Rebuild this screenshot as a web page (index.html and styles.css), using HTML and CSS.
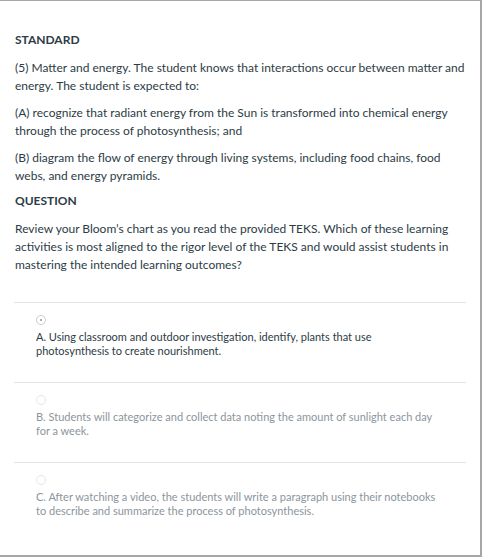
FILE: index.html
```html
<!DOCTYPE html>
<html>
<head>
<meta charset="utf-8">
<link rel="stylesheet" href="styles.css">
</head>
<body>
<div class="frame">
  <div class="content">
    <h3 class="label">STANDARD</h3>
    <p class="para">(5) Matter and energy. The student knows that interactions occur between matter and energy. The student is expected to:</p>
    <p class="para">(A) recognize that radiant energy from the Sun is transformed into chemical energy through the process of photosynthesis; and</p>
    <p class="para">(B) diagram the flow of energy through living systems, including food chains, food webs, and energy pyramids.</p>
    <h3 class="label">QUESTION</h3>
    <p class="para">Review your Bloom’s chart as you read the provided TEKS. Which of these learning activities is most aligned to the rigor level of the TEKS and would assist students in mastering the intended learning outcomes?</p>
  </div>
  <div class="options">
    <div class="option selected">
      <span class="radio"><span class="dot"></span></span>
      <div class="opt-text">A. Using classroom and outdoor investigation, identify, plants that use photosynthesis to create nourishment.</div>
    </div>
    <div class="option">
      <span class="radio"></span>
      <div class="opt-text">B. Students will categorize and collect data noting the amount of sunlight each day for a week.</div>
    </div>
    <div class="option">
      <span class="radio"></span>
      <div class="opt-text">C. After watching a video, the students will write a paragraph using their notebooks to describe and summarize the process of photosynthesis.</div>
    </div>
  </div>
</div>
</body>
</html>
```
FILE: styles.css
```css
html, body {
  margin: 0;
  padding: 0;
  background: #fff;
}
body {
  font-family: Lato, "Noto Sans", sans-serif;
  color: #2d3b45;
}
.frame {
  width: 482px;
  height: 557px;
  box-sizing: border-box;
  border-top: 1px solid #a6a6a6;
  border-right: 2px solid #a6a6a6;
  border-bottom: 2px solid #a6a6a6;
}
.content {
  padding: 32px 14px 0 15px;
}
.label {
  margin: 0 0 12px 0;
  font-size: 12px;
  font-weight: 700;
  line-height: 14px;
}
.para {
  margin: 0 0 9px 0;
  font-size: 12px;
  line-height: 18px;
}
.options {
  margin: 28px 14px 0 14px;
}
.option {
  border-top: 1px solid #e2e5e8;
  height: 67px;
  padding: 12px 0 0 22px;
}
.radio {
  display: flex;
  align-items: center;
  justify-content: center;
  width: 10px;
  height: 10px;
  box-sizing: border-box;
  border: 1px solid #e3e5e7;
  border-radius: 50%;
  margin-bottom: 5px;
}
.selected .radio {
  border-color: #c9cdd1;
}
.dot {
  width: 2px;
  height: 2px;
  border-radius: 50%;
  background: #8d959b;
}
.opt-text {
  font-size: 11px;
  line-height: 14px;
  color: #8b959d;
  padding-right: 25px;
}
.selected .opt-text {
  color: #2d3b45;
}
```
